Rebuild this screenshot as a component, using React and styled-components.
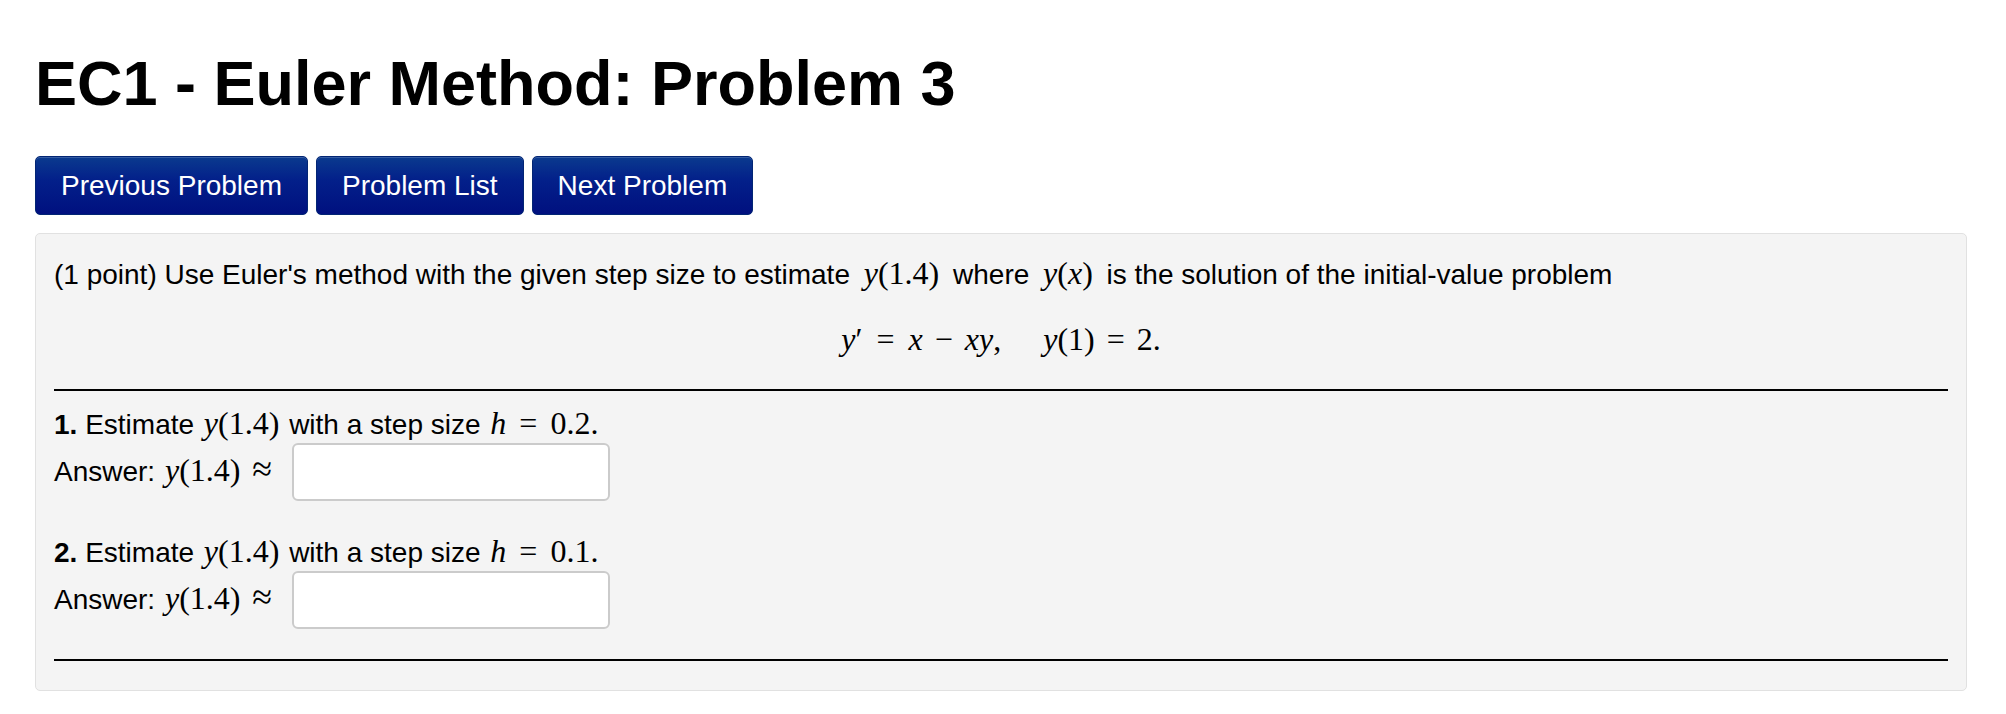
import React from "react";
import styled, { createGlobalStyle } from "styled-components";

const GlobalStyle = createGlobalStyle`
  body {
    margin: 0;
    background: #ffffff;
    color: #000000;
    font-family: "Liberation Sans", Arial, Helvetica, sans-serif;
  }
`;

const Page = styled.div`
  padding: 46px 39px 20px 35px;
`;

const Title = styled.h1`
  margin: 0;
  font-size: 63px;
  line-height: 74px;
  font-weight: bold;
`;

const NavRow = styled.div`
  display: flex;
  gap: 8px;
  margin-top: 36px;
`;

const NavButton = styled.button`
  height: 59px;
  padding: 0 25px;
  font-family: inherit;
  font-size: 28px;
  color: #ffffff;
  background: linear-gradient(to bottom, #0a3a8e 0%, #03208a 40%, #00107f 100%);
  border: 1px solid #022574;
  border-radius: 5px;
  box-shadow: inset 0 1px 0 rgba(255, 255, 255, 0.18);
  cursor: pointer;
`;

const Panel = styled.div`
  margin-top: 18px;
  padding: 19px 18px 29px;
  background: #f4f4f4;
  border: 1px solid #e1e1e1;
  border-radius: 5px;
  font-size: 28px;
  line-height: 40px;
`;

const Para = styled.div`
  margin-top: ${(props) => props.top || 0}px;
`;

const DisplayMath = styled.div`
  margin-top: 24px;
  text-align: center;
  font-family: "Liberation Serif", "Times New Roman", serif;
  font-size: 32px;
`;

const Rule = styled.hr`
  margin: ${(props) => props.top}px 0 0;
  border: none;
  height: 2px;
  background: #000000;
`;

const Math = styled.span`
  font-family: "Liberation Serif", "Times New Roman", serif;
  font-size: ${(props) => props.size || 32}px;
  padding: 0 ${(props) => props.pad ?? 2}px;
`;

const V = styled.i`
  font-style: italic;
`;

const Op = styled.span`
  margin: 0 ${(props) => props.space || 9}px;
`;

const Gap = styled.span`
  display: inline-block;
  width: ${(props) => props.w}px;
`;

const AnswerRow = styled.div`
  display: flex;
  align-items: center;
  gap: 18px;
  margin-top: -2px;
`;

const AnswerLabel = styled.span`
  padding-bottom: 4px;
`;

const AnswerInput = styled.input`
  width: 318px;
  height: 58px;
  box-sizing: border-box;
  border: 2px solid #cbcbcb;
  border-radius: 6px;
  background: #ffffff;
  font-size: 24px;
  padding: 0 10px;
`;

const Y14 = ({ pad }) => (
  <Math pad={pad}>
    <V>y</V>(1.4)
  </Math>
);

function Part({ num, step, top }) {
  return (
    <>
      <Para top={top}>
        <b>{num}.</b> Estimate <Y14 /> with a step size{" "}
        <Math>
          <V>h</V>
          <Op space={13}>=</Op>
          {step}.
        </Math>
      </Para>
      <AnswerRow>
        <AnswerLabel>
          Answer: <Y14 /> <Math size={36}>≈</Math>
        </AnswerLabel>
        <AnswerInput type="text" />
      </AnswerRow>
    </>
  );
}

export default function App() {
  return (
    <Page>
      <GlobalStyle />
      <Title>EC1 - Euler Method: Problem 3</Title>
      <NavRow>
        <NavButton>Previous Problem</NavButton>
        <NavButton>Problem List</NavButton>
        <NavButton>Next Problem</NavButton>
      </NavRow>
      <Panel>
        <Para>
          (1 point) Use Euler's method with the given step size to estimate{" "}
          <Y14 pad={6} /> where{" "}
          <Math pad={6}>
            <V>y</V>(<V>x</V>)
          </Math>{" "}
          is the solution of the initial-value problem
        </Para>
        <DisplayMath>
          <V>y</V>′<Op space={14}>=</Op>
          <V>x</V>
          <Op space={12}>−</Op>
          <V>xy</V>,<Gap w={42} />
          <V>y</V>(1)<Op space={12}>=</Op>2.
        </DisplayMath>
        <Rule top={30} />
        <Part num={1} step="0.2" top={12} />
        <Part num={2} step="0.1" top={30} />
        <Rule top={30} />
      </Panel>
    </Page>
  );
}
